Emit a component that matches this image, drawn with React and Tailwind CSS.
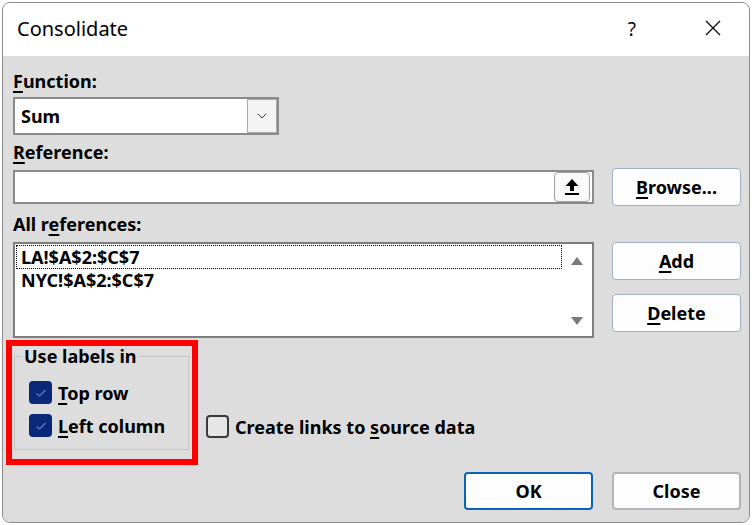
import { ChevronDown } from 'lucide-react';

function Key({ children }) {
  return <span className="underline underline-offset-[3px] decoration-[1.5px]">{children}</span>;
}

function Label({ children }) {
  return <div className="h-[22px] leading-[22px]">{children}</div>;
}

function DialogButton({ children, primary = false, muted = false }) {
  return (
    <button
      type="button"
      className={`h-[38px] w-[129px] rounded-[4px] bg-[#fdfdfd] leading-[22px] ${
        primary
          ? 'border-2 border-[#0a63b8]'
          : muted
            ? 'border-2 border-[#b4b4b4]'
            : 'border border-[#9fb0c2]'
      }`}
    >
      {children}
    </button>
  );
}

function Check({ checked, children }) {
  return (
    <div className="flex items-center gap-[6px] h-[23px]">
      {checked ? (
        <span className="w-[23px] h-[23px] rounded-[4px] bg-[#0b2878] flex items-center justify-center">
          <svg width="12" height="10" viewBox="0 0 12 10" fill="none">
            <path d="M1.5 5.5 L4.5 8 L10.5 2" stroke="#5f7fc8" strokeWidth="1.2" />
          </svg>
        </span>
      ) : (
        <span className="w-[23px] h-[23px] rounded-[4px] border-2 border-[#3a3a3a] bg-[#e6e6e6]" />
      )}
      <span className="leading-[22px]">{children}</span>
    </div>
  );
}

function UploadIcon() {
  return (
    <svg width="16" height="18" viewBox="0 0 16 18">
      <path d="M8 1 L14.5 8 L10 8 L10 13 L6 13 L6 8 L1.5 8 Z" fill="#000" />
      <rect x="1" y="15" width="14" height="2" fill="#000" />
    </svg>
  );
}

export default function App() {
  return (
    <div className="w-[752px] h-[525px] bg-white pl-[2px] pt-[2px] font-['Noto_Sans','Open_Sans',sans-serif] text-black">
      <div className="w-[748px] h-[521px] border border-[#8a8a8a] rounded-[8px] overflow-hidden flex flex-col">
        {/* title bar */}
        <div className="h-[53px] bg-white flex items-center shrink-0">
          <span className="ml-[14px] text-[20px] leading-[24px] -mt-[2px]">Consolidate</span>
          <span className="ml-auto text-[19px] leading-[24px] -mt-[2px]">?</span>
          <span className="ml-[69px] mr-[28px] -mt-[4px]">
            <svg width="16" height="16" viewBox="0 0 16 16">
              <path d="M1 1 L15 15 M15 1 L1 15" stroke="#111" strokeWidth="1.4" />
            </svg>
          </span>
        </div>

        {/* body */}
        <div className="flex-1 bg-[#dddddd] pl-[10px] pr-[8px] text-[18px] font-bold">
          <div className="mt-[14px]">
            <Label>
              <Key>F</Key>unction:
            </Label>
          </div>

          <div className="mt-[5px] w-[266px] h-[38px] border-2 border-[#8a8a8a] bg-white flex">
            <span className="flex-1 pl-[6px] leading-[34px]">Sum</span>
            <span className="w-[30px] h-full border border-[#a8a8a8] bg-[#f4f4f4] flex items-center justify-center">
              <ChevronDown className="w-[16px] h-[16px] text-[#333]" strokeWidth={1.5} />
            </span>
          </div>

          <div className="mt-[6px]">
            <Label>
              <Key>R</Key>eference:
            </Label>
          </div>

          <div className="mt-[5px] flex items-center justify-between">
            <div className="w-[581px] h-[34px] border-2 border-[#8a8a8a] bg-white flex items-center justify-end pr-[2px]">
              <span className="w-[36px] h-[30px] rounded-[4px] border border-[#a0a0a0] bg-[#fafafa] flex items-center justify-center">
                <UploadIcon />
              </span>
            </div>
            <DialogButton>
              <Key>B</Key>rowse...
            </DialogButton>
          </div>

          <div className="mt-[7px]">
            <Label>
              All r<Key>e</Key>ferences:
            </Label>
          </div>

          <div className="mt-[7px] flex justify-between">
            <div className="w-[581px] h-[96px] border-2 border-[#7d7d7d] bg-white flex">
              <div className="flex-1 pt-px pl-px">
                <div className="h-[24px] border border-dotted border-black pl-[4px] leading-[22px]">LA!$A$2:$C$7</div>
                <div className="pl-[5px] leading-[22px]">NYC!$A$2:$C$7</div>
              </div>
              <div className="w-[30px] flex flex-col items-center justify-between pt-[13px] pb-[11px]">
                <svg width="12" height="8" viewBox="0 0 12 8">
                  <path d="M6 0 L12 8 L0 8 Z" fill="#7a7a7a" />
                </svg>
                <svg width="12" height="8" viewBox="0 0 12 8">
                  <path d="M0 0 L12 0 L6 8 Z" fill="#7a7a7a" />
                </svg>
              </div>
            </div>
            <div className="flex flex-col gap-[14px]">
              <DialogButton>
                <Key>A</Key>dd
              </DialogButton>
              <DialogButton>
                <Key>D</Key>elete
              </DialogButton>
            </div>
          </div>

          <div className="mt-[2px] flex items-start">
            <div className="-ml-[7px] w-[192px] border-[6px] border-[#ff0000] pl-[2px] pr-[3px] pb-[9px]">
              <fieldset className="-mt-px border border-[#c4c4c4] pb-[12px] pl-[14px]">
                <legend className="-ml-[7px] px-[2px] h-[22px] leading-[22px] font-bold">Use labels in</legend>
                <div className="mt-[14px] flex flex-col gap-[10px]">
                  <Check checked>
                    <Key>T</Key>op row
                  </Check>
                  <Check checked>
                    <Key>L</Key>eft column
                  </Check>
                </div>
              </fieldset>
            </div>
            <div className="ml-[8px] mt-[75px]">
              <Check>
                Create links to <Key>s</Key>ource data
              </Check>
            </div>
          </div>

          <div className="mt-[7px] flex justify-end gap-[19px]">
            <DialogButton primary>OK</DialogButton>
            <DialogButton muted>Close</DialogButton>
          </div>
        </div>
      </div>
    </div>
  );
}
